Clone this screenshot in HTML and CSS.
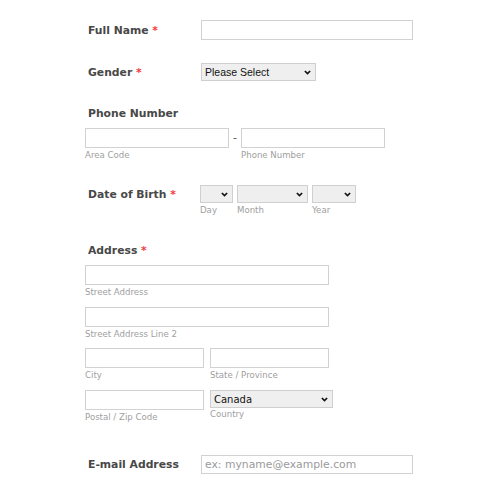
FILE: index.html
```html
<!DOCTYPE html>
<html>
<head>
<meta charset="utf-8">
<link rel="stylesheet" href="styles.css">
</head>
<body>
<form class="form">
  <div class="row inline r-name">
    <label class="label">Full Name <span class="req">*</span></label>
    <input class="input w-name" type="text">
  </div>

  <div class="row inline r-gender">
    <label class="label">Gender <span class="req">*</span></label>
    <div class="sel w-gender">
      <select class="select sans"><option>Please Select</option></select>
      <svg class="chev" viewBox="0 0 8 5"><path d="M1 0.8 L4 3.8 L7 0.8" fill="none" stroke="#111" stroke-width="1.9"/></svg>
    </div>
  </div>

  <div class="row stack r-phone">
    <label class="label top">Phone Number</label>
    <div class="fields">
      <div class="field">
        <input class="input w-phone" type="text">
        <span class="sub">Area Code</span>
      </div>
      <span class="dash">-</span>
      <div class="field">
        <input class="input w-phone" type="text">
        <span class="sub">Phone Number</span>
      </div>
    </div>
  </div>

  <div class="row inline r-dob">
    <label class="label">Date of Birth <span class="req">*</span></label>
    <div class="fields gap4 dob">
      <div class="field">
        <div class="sel w-day">
          <select class="select"><option></option></select>
          <svg class="chev" viewBox="0 0 8 5"><path d="M1 0.8 L4 3.8 L7 0.8" fill="none" stroke="#111" stroke-width="1.9"/></svg>
        </div>
        <span class="sub">Day</span>
      </div>
      <div class="field">
        <div class="sel w-month">
          <select class="select"><option></option></select>
          <svg class="chev" viewBox="0 0 8 5"><path d="M1 0.8 L4 3.8 L7 0.8" fill="none" stroke="#111" stroke-width="1.9"/></svg>
        </div>
        <span class="sub">Month</span>
      </div>
      <div class="field">
        <div class="sel w-year">
          <select class="select"><option></option></select>
          <svg class="chev" viewBox="0 0 8 5"><path d="M1 0.8 L4 3.8 L7 0.8" fill="none" stroke="#111" stroke-width="1.9"/></svg>
        </div>
        <span class="sub">Year</span>
      </div>
    </div>
  </div>

  <div class="row stack r-address">
    <label class="label top">Address <span class="req">*</span></label>
    <div class="addr">
      <div class="field">
        <input class="input w-street" type="text">
        <span class="sub">Street Address</span>
      </div>
      <div class="field line2">
        <input class="input w-street" type="text">
        <span class="sub">Street Address Line 2</span>
      </div>
      <div class="fields gap6 city">
        <div class="field">
          <input class="input w-half" type="text">
          <span class="sub">City</span>
        </div>
        <div class="field">
          <input class="input w-half" type="text">
          <span class="sub">State / Province</span>
        </div>
      </div>
      <div class="fields gap6 postal">
        <div class="field">
          <input class="input w-half" type="text">
          <span class="sub">Postal / Zip Code</span>
        </div>
        <div class="field">
          <div class="sel w-country">
            <select class="select"><option>Canada</option></select>
            <svg class="chev" viewBox="0 0 8 5"><path d="M1 0.8 L4 3.8 L7 0.8" fill="none" stroke="#111" stroke-width="1.9"/></svg>
          </div>
          <span class="sub">Country</span>
        </div>
      </div>
    </div>
  </div>

  <div class="row inline r-email">
    <label class="label">E-mail Address</label>
    <input class="input w-email" type="text" placeholder="ex: myname@example.com">
  </div>
</form>
</body>
</html>
```

FILE: styles.css
```css
html, body {
  margin: 0;
  padding: 0;
  background: #ffffff;
}

body {
  font-family: "DejaVu Sans", Verdana, sans-serif;
  width: 500px;
  height: 484px;
  overflow: hidden;
}

.form {
  display: flex;
  flex-direction: column;
  padding: 20px 0 0 85px;
}

.row.inline {
  display: flex;
  align-items: flex-start;
}

.row.stack {
  display: flex;
  flex-direction: column;
}

.label {
  font-size: 10.8px;
  font-weight: bold;
  color: #484848;
  line-height: 22px;
  height: 20px;
  width: 113px;
  padding-left: 3px;
  flex: none;
}

.label.top {
  line-height: 15px;
  height: 14px;
  width: auto;
}

.req {
  color: #f23a3c;
}

.r-gender { margin-top: 23px; }
.r-gender .label { line-height: 20px; height: 18px; }
.r-phone { margin-top: 25px; }
.r-phone .fields { margin-top: 8px; }
.r-dob { margin-top: 24px; }
.r-dob .label { line-height: 20px; height: 18px; }
.r-address { margin-top: 27px; }
.r-address .addr { margin-top: 8px; display: flex; flex-direction: column; }
.line2 { margin-top: 9px; }
.city { margin-top: 8px; }
.postal { margin-top: 9px; }
.r-email { margin-top: 32px; }
.r-email .label { line-height: 20px; height: 19px; }

.dob { margin-left: -1px; }

.fields {
  display: flex;
  align-items: flex-start;
}

.gap4 { gap: 4px; }
.gap6 { gap: 6px; }

.field {
  display: flex;
  flex-direction: column;
}

.input {
  display: block;
  box-sizing: border-box;
  height: 20px;
  margin: 0;
  border: 1px solid #d2d2d2;
  background: #ffffff;
  padding: 0 3px;
  font-family: "DejaVu Sans", Verdana, sans-serif;
  font-size: 10.8px;
  color: #333333;
  outline: none;
}

.input::placeholder {
  color: #9a9a9a;
}

.w-name { width: 212px; }
.w-phone { width: 144px; }
.w-street { width: 244px; }
.w-half { width: 119px; }
.w-email { width: 212px; height: 19px; }

.dash {
  width: 12px;
  text-align: center;
  font-size: 11px;
  color: #555555;
  line-height: 20px;
}

.sub {
  display: block;
  font-size: 8.6px;
  line-height: 12px;
  padding-top: 1px;
  color: #a0a0a0;
  white-space: nowrap;
}

.sel {
  position: relative;
  height: 18px;
}

.select {
  display: block;
  appearance: none;
  -webkit-appearance: none;
  box-sizing: border-box;
  width: 100%;
  height: 18px;
  margin: 0;
  border: 1px solid #cfcfcf;
  border-radius: 0;
  background: #efefef;
  padding: 0 3px;
  font-family: "DejaVu Sans", Verdana, sans-serif;
  font-size: 10px;
  color: #111111;
  outline: none;
}

.select.sans {
  font-family: "Liberation Sans", Arial, sans-serif;
  font-size: 10.5px;
}

.chev {
  position: absolute;
  right: 5px;
  top: 7px;
  width: 7px;
  height: 5px;
  pointer-events: none;
}

.w-gender { width: 115px; }
.w-day { width: 33px; }
.w-month { width: 71px; }
.w-year { width: 44px; }
.w-country { width: 123px; }
.w-country + .sub { padding-top: 0; }
```
